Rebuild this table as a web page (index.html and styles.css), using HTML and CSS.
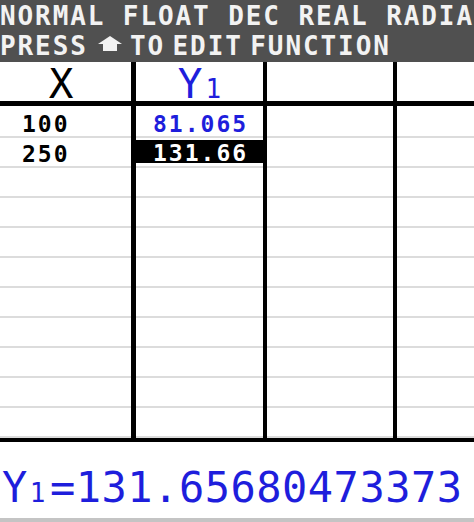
FILE: index.html
```html
<!DOCTYPE html>
<html>
<head>
<meta charset="utf-8">
<link rel="stylesheet" href="styles.css">
</head>
<body>
<div class="screen">
  <div class="status">
    <div class="status-line">NORMAL FLOAT DEC REAL RADIA</div>
    <div class="status-line press">PRESS <svg class="arrow" viewBox="0 0 24 15"><polygon points="12,0 24,8 19,8 19,15 5,15 5,8 0,8" fill="#f2f2f2"/></svg> TO EDIT FUNCTION</div>
  </div>
  <div class="table">
    <div class="col c1">
      <div class="hd hd-x">X</div>
      <div class="body">
        <div class="row">100</div>
        <div class="row">250</div>
        <div class="row"></div><div class="row"></div><div class="row"></div>
        <div class="row"></div><div class="row"></div><div class="row"></div>
        <div class="row"></div><div class="row"></div><div class="row"></div>
      </div>
    </div>
    <div class="col c2">
      <div class="hd hd-y">Y<span class="hsub">1</span></div>
      <div class="body">
        <div class="row">81.065</div>
        <div class="row sel"><span class="hl">131.66</span></div>
        <div class="row"></div><div class="row"></div><div class="row"></div>
        <div class="row"></div><div class="row"></div><div class="row"></div>
        <div class="row"></div><div class="row"></div><div class="row"></div>
      </div>
    </div>
    <div class="col c3">
      <div class="hd"></div>
      <div class="body">
        <div class="row"></div><div class="row"></div><div class="row"></div>
        <div class="row"></div><div class="row"></div><div class="row"></div>
        <div class="row"></div><div class="row"></div><div class="row"></div>
        <div class="row"></div><div class="row"></div>
      </div>
    </div>
    <div class="col c4">
      <div class="hd"></div>
      <div class="body">
        <div class="row"></div><div class="row"></div><div class="row"></div>
        <div class="row"></div><div class="row"></div><div class="row"></div>
        <div class="row"></div><div class="row"></div><div class="row"></div>
        <div class="row"></div><div class="row"></div>
      </div>
    </div>
  </div>
  <div class="entry">Y<span class="esub">1</span>=131.65680473373</div>
</div>
</body>
</html>
```
FILE: styles.css
```css
* {
  box-sizing: border-box;
  margin: 0;
  padding: 0;
}

html, body {
  margin: 0;
  background: #ffffff;
}

body {
  width: 474px;
  height: 522px;
  overflow: hidden;
  font-family: "DejaVu Sans Mono", monospace;
}

.screen {
  width: 474px;
  height: 522px;
  display: flex;
  flex-direction: column;
}

/* status bar */
.status {
  height: 62px;
  flex: none;
  background: #505050;
  color: #f2f2f2;
  font-weight: bold;
  font-size: 26px;
  letter-spacing: 1.9px;
  padding-top: 1px;
  white-space: nowrap;
}

.status-line {
  height: 30px;
  line-height: 30px;
}

.status-line.press {
  word-spacing: -10px;
}

.arrow {
  width: 24px;
  height: 15px;
  vertical-align: 4px;
  margin-left: 3px;
}

/* table */
.table {
  display: flex;
  flex: none;
  height: 380px;
  border-bottom: 4px solid #000;
}

.col {
  display: flex;
  flex-direction: column;
}

.c1 { width: 131px; }
.c2 { width: 132px; border-left: 5px solid #000; }
.c3 { width: 130px; border-left: 4px solid #000; }
.c4 { flex: 1; border-left: 4px solid #000; }

.hd {
  height: 44px;
  flex: none;
  border-bottom: 5px solid #000;
  font-size: 41px;
  line-height: 40px;
  padding-top: 2px;
  text-align: center;
  color: #000;
}

.hd-x {
  padding-right: 9px;
}

.hd-y {
  color: #1e1edc;
}

.hsub {
  font-size: 26px;
  margin-left: 3px;
}

.body {
  border-bottom: 2px solid #dcdcdc;
}

.row {
  height: 30px;
  border-top: 2px solid #dcdcdc;
  padding-top: 2px;
  font-size: 23px;
  line-height: 28px;
  font-weight: bold;
  letter-spacing: 2px;
  white-space: nowrap;
}

.row:first-child {
  border-top-color: transparent;
}

.c1 .row {
  padding-left: 22px;
  color: #000;
}

.c2 .row {
  padding-left: 17px;
  color: #1e1edc;
}

.c2 .row.sel {
  padding-left: 0;
}

.hl {
  display: block;
  height: 23px;
  line-height: 23px;
  padding: 2px 0 0 17px;
  background: #000;
  color: #fff;
}

/* entry line */
.entry {
  flex: none;
  height: 80px;
  padding: 25px 0 0 2px;
  border-bottom: 4px solid #c4c4c4;
  font-size: 42px;
  line-height: 42px;
  letter-spacing: 0.5px;
  color: #1e1edc;
  white-space: nowrap;
}

.esub {
  font-size: 26px;
  margin: 0 4px 0 2px;
}
```
